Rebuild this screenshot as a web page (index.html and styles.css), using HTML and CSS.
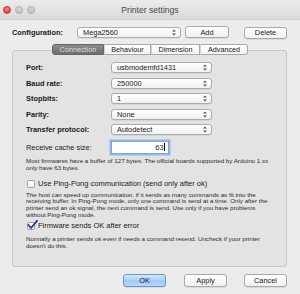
FILE: index.html
```html
<!DOCTYPE html>
<html lang="en">
<head>
  <meta charset="UTF-8">
  <title>Printer settings</title>
  <link rel="stylesheet" href="styles.css">
</head>
<body>
  <div class="window">
    <!-- Title bar -->
    <div class="titlebar">
      <div class="lights">
        <span class="light close"></span>
        <span class="light"></span>
        <span class="light"></span>
      </div>
      <div class="title">Printer settings</div>
      <div></div>
    </div>

    <!-- Configuration -->
    <div class="config-row">
      <label class="config-label">Configuration:</label>
      <div class="combo config-combo">
        <span>Mega2560</span>
        <svg class="arrows" width="4" height="7" viewBox="0 0 4 7"><path d="M0 2.6 L2 0.4 L4 2.6 Z M0 4.4 L2 6.6 L4 4.4 Z" fill="#555"/></svg>
      </div>
      <button class="btn add-btn">Add</button>
      <button class="btn delete-btn">Delete</button>
    </div>

    <!-- Tabs -->
    <div class="tabs">
      <div class="tab active" style="width:52px">Connection</div>
      <div class="tab" style="width:47px">Behaviour</div>
      <div class="tab" style="width:49px">Dimension</div>
      <div class="tab last" style="width:48px">Advanced</div>
    </div>

    <div class="group">
      <div class="form">
        <label>Port:</label>
        <div class="combo"><span>usbmodemfd1431</span><svg class="arrows" width="4" height="7" viewBox="0 0 4 7"><path d="M0 2.6 L2 0.4 L4 2.6 Z M0 4.4 L2 6.6 L4 4.4 Z" fill="#555"/></svg></div>

        <label>Baud rate:</label>
        <div class="combo"><span>250000</span><svg class="arrows" width="4" height="7" viewBox="0 0 4 7"><path d="M0 2.6 L2 0.4 L4 2.6 Z M0 4.4 L2 6.6 L4 4.4 Z" fill="#555"/></svg></div>

        <label>Stopbits:</label>
        <div class="combo"><span>1</span><svg class="arrows" width="4" height="7" viewBox="0 0 4 7"><path d="M0 2.6 L2 0.4 L4 2.6 Z M0 4.4 L2 6.6 L4 4.4 Z" fill="#555"/></svg></div>

        <label>Parity:</label>
        <div class="combo"><span>None</span><svg class="arrows" width="4" height="7" viewBox="0 0 4 7"><path d="M0 2.6 L2 0.4 L4 2.6 Z M0 4.4 L2 6.6 L4 4.4 Z" fill="#555"/></svg></div>

        <label>Transfer protocol:</label>
        <div class="combo"><span>Autodetect</span><svg class="arrows" width="4" height="7" viewBox="0 0 4 7"><path d="M0 2.6 L2 0.4 L4 2.6 Z M0 4.4 L2 6.6 L4 4.4 Z" fill="#555"/></svg></div>

        <label class="plain">Receive cache size:</label>
        <div class="cache-input">63<span class="caret"></span></div>
      </div>

      <p class="note first">Most firmwares have a buffer of 127 bytes. The official boards supported by Arduino 1.xx<br>only have 63 bytes.</p>

      <div class="check-row ping">
        <span class="checkbox"></span>
        <span>Use Ping-Pong communication (send only after ok)</span>
      </div>

      <p class="note">The host can speed up communication, if it sends as many commands as fit into the<br>receiving buffer. In Ping-Pong mode, only one command is send at a time. Only after the<br>printer send an ok signal, the next command is send. Use only if you have problems<br>without Ping-Pong mode.</p>

      <div class="check-row firmware">
        <span class="checkbox checked">
          <svg width="11" height="10" viewBox="0 0 11 10"><path d="M1.5 5 L4 8 L10 0.8" fill="none" stroke="#1d3f86" stroke-width="1.8" stroke-linecap="round" stroke-linejoin="round"/></svg>
        </span>
        <span>Firmware sends OK after error</span>
      </div>

      <p class="note last">Normally a printer sends ok even if needs a command resend. Uncheck if your printer<br>doesn't do this.</p>
    </div>

    <!-- Dialog buttons -->
    <div class="dialog-buttons">
      <button class="btn default">OK</button>
      <button class="btn apply-btn">Apply</button>
      <button class="btn cancel-btn">Cancel</button>
    </div>
  </div>
</body>
</html>
```

FILE: styles.css
```css
body {
  margin: 0;
  font-family: "Liberation Sans", Arial, sans-serif;
  color: #1a1a1a;
}

.window {
  width: 300px;
  height: 294px;
  overflow: hidden;
  background: #ececec;
}

/* Title bar */
.titlebar {
  display: grid;
  grid-template-columns: 1fr auto 1fr;
  align-items: center;
  height: 20px;
  background: linear-gradient(#ececec, #dadada);
  border-bottom: 1px solid #cdcdcd;
  box-sizing: border-box;
}

.lights {
  display: flex;
  gap: 4px;
  padding-left: 3px;
}

.light {
  width: 8px;
  height: 8px;
  border-radius: 50%;
  box-sizing: border-box;
  background: linear-gradient(#d8d8d8, #c2c2c2);
  border: 1px solid #adadad;
}

.light.close {
  background: radial-gradient(circle at 50% 35%, #ff8a80, #e0443c 70%);
  border-color: #b93a33;
}

.title {
  font-size: 8.6px;
  color: #4a4a4a;
}

/* Configuration row */
.config-row {
  display: flex;
  align-items: center;
  margin-top: 6px;
  padding-left: 12px;
  height: 12px;
}

.config-label {
  width: 65px;
  font-size: 7.4px;
  font-weight: bold;
}

.combo {
  display: flex;
  align-items: center;
  justify-content: space-between;
  box-sizing: border-box;
  height: 11px;
  padding: 0 4px 0 5px;
  font-size: 7.4px;
  background: linear-gradient(#ffffff, #f1f1f1);
  border: 1px solid #acacac;
  border-radius: 3px;
  box-shadow: 0 0.5px 0.5px rgba(0, 0, 0, 0.12);
}

.config-combo {
  width: 104px;
  height: 11px;
}

.btn {
  box-sizing: border-box;
  height: 12px;
  padding: 0;
  font-family: inherit;
  font-size: 7.4px;
  color: #1a1a1a;
  background: linear-gradient(#ffffff, #f0f0f0);
  border: 1px solid #a9a9a9;
  border-radius: 3px;
  box-shadow: 0 0.5px 0.5px rgba(0, 0, 0, 0.15);
}

.add-btn {
  width: 44px;
  margin-left: 4px;
}

.delete-btn {
  width: 43px;
  margin-left: 15px;
  margin-top: 1px;
}

/* Tabs */
.tabs {
  display: flex;
  justify-content: center;
  margin-top: 6px;
  position: relative;
  z-index: 1;
}

.tab {
  box-sizing: border-box;
  height: 11px;
  line-height: 9px;
  font-size: 7.2px;
  text-align: center;
  background: linear-gradient(#ffffff, #f2f2f2);
  border: 1px solid #a8a8a8;
  border-left: 1px solid #d4d4d4;
}

.tab.active {
  color: #dcdcdc;
  background: linear-gradient(#8c8c8c, #6e6e6e);
  border-color: #666;
  border-radius: 3px 0 0 3px;
}

.tab.last {
  border-radius: 0 3px 3px 0;
}

.group {
  box-sizing: border-box;
  height: 217px;
  margin: -5px 13px 0 12px;
  padding: 11px 0 0 13px;
  background: #e3e3e3;
  border: 1px solid #c9c9c9;
  border-radius: 3px;
}

.form {
  display: grid;
  grid-template-columns: 85px 101px;
  grid-auto-rows: 15.5px;
  align-items: start;
}

.form label {
  font-size: 7.4px;
  font-weight: bold;
  line-height: 11px;
}

.form label.plain {
  font-weight: normal;
  line-height: 13px;
  margin-top: 1px;
}

.cache-input {
  width: 58px;
  height: 13px;
  margin-top: 1px;
  box-sizing: border-box;
  padding-right: 3px;
  text-align: right;
  font-size: 7.4px;
  line-height: 11px;
  background: #fff;
  border: 1px solid #8aa6cc;
  box-shadow: 0 0 0 1.5px #8bb8ef;
}

.caret {
  display: inline-block;
  width: 1px;
  height: 8px;
  margin-left: 0.5px;
  vertical-align: -1px;
  background: #000;
}

.note {
  margin: 3px 0 0 0;
  font-size: 6.2px;
  line-height: 6.8px;
  color: #2a2a2a;
  white-space: nowrap;
}

.check-row {
  display: flex;
  align-items: center;
  gap: 3px;
  height: 10px;
  font-size: 7.5px;
}

.check-row.ping {
  margin-top: 7px;
  margin-bottom: 2px;
}

.check-row.firmware {
  margin-top: 2px;
  margin-bottom: 5px;
}

.checkbox {
  position: relative;
  box-sizing: border-box;
  width: 8px;
  height: 8px;
  margin-left: 1px;
  background: linear-gradient(#ffffff, #f0f0f0);
  border: 1px solid #a5a5a5;
  border-radius: 2px;
}

.checkbox.checked svg {
  position: absolute;
  left: -1px;
  top: -3px;
}

/* Dialog buttons */
.dialog-buttons {
  display: flex;
  justify-content: flex-end;
  margin-top: 7px;
  padding-right: 13px;
}

.dialog-buttons .btn {
  width: 43px;
  height: 13px;
}

.btn.default {
  background: linear-gradient(#d6e8fc, #9fcbf5 55%, #b7d8f8);
  border-color: #6a93c8;
}

.apply-btn {
  margin-left: 18px;
}

.cancel-btn {
  margin-left: 17px;
}
```
